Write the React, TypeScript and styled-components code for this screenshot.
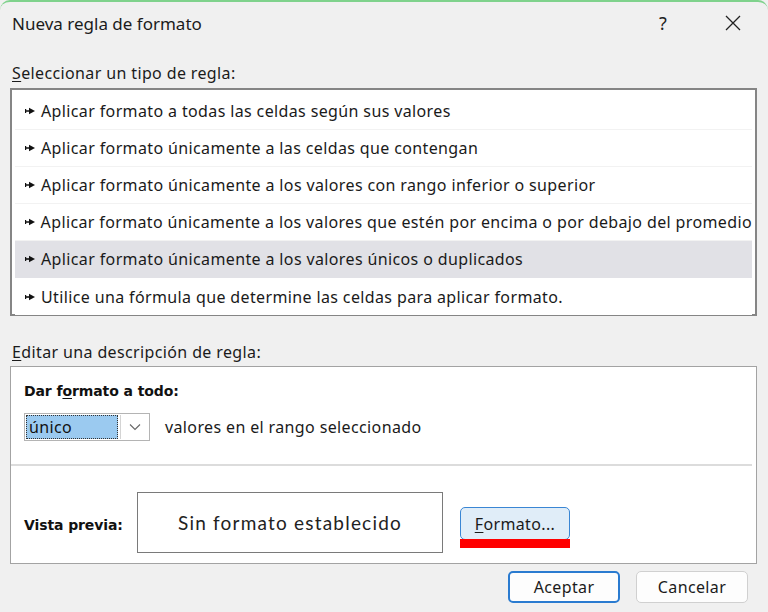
import React, { useState } from 'react'
import styled, { createGlobalStyle } from 'styled-components'

const GlobalStyle = createGlobalStyle`
    html, body {
        margin: 0;
        padding: 0;
        background: #f0f0f0;
    }
`

const rules = [
    'Aplicar formato a todas las celdas según sus valores',
    'Aplicar formato únicamente a las celdas que contengan',
    'Aplicar formato únicamente a los valores con rango inferior o superior',
    'Aplicar formato únicamente a los valores que estén por encima o por debajo del promedio',
    'Aplicar formato únicamente a los valores únicos o duplicados',
    'Utilice una fórmula que determine las celdas para aplicar formato.',
]

const Dialog = styled.div`
    width: 768px;
    height: 612px;
    box-sizing: border-box;
    background: #f0f0f0;
    border-top: 2px solid #7fd28c;
    border-radius: 10px 10px 0 0;
    font-family: 'Noto Sans', 'Open Sans', sans-serif;
    color: #1a1a1a;
    overflow: hidden;
    display: flex;
    flex-direction: column;
`

const TitleBar = styled.div`
    height: 42px;
    display: flex;
    align-items: center;
    padding: 0 0 0 12px;
`

const Title = styled.div`
    flex: 1;
    font-size: 17px;
    color: #1b1b1b;
`

const TitleButton = styled.div`
    width: 70px;
    height: 42px;
    display: flex;
    align-items: center;
    justify-content: center;
    font-size: 18px;
    color: #222;
`

const Body = styled.div`
    padding: 0 11px 0 10px;
    display: flex;
    flex-direction: column;
`

// text in the dialog is Segoe-like: slightly wider than Noto Sans
const uiText = `
    font-size: 16px;
    letter-spacing: 0.37px;
`

const SectionLabel = styled.div<{ $top: number }>`
    ${uiText}
    margin: ${(p) => p.$top}px 0 0 2px;
    height: 22px;
    line-height: 22px;
    color: #1b1b1b;
    u {
        text-decoration: underline;
        text-underline-offset: 2px;
    }
`

const ListBox = styled.div`
    margin-top: 4px;
    height: 228px;
    box-sizing: border-box;
    border: 2px solid #858585;
    background: #fff;
    padding: 3px 3px 0 3px;
`

const RuleRow = styled.div<{ $selected: boolean }>`
    ${uiText}
    height: 37px;
    box-sizing: border-box;
    display: flex;
    align-items: center;
    padding-left: 10px;
    white-space: nowrap;
    background: ${(p) => (p.$selected ? '#e1e1e6' : '#fff')};
    border-bottom: 1px solid ${(p) => (p.$selected ? '#e1e1e6' : '#f2f2f2')};
    &:last-child {
        border-bottom: none;
    }
`

const ArrowBox = styled.span`
    width: 16px;
    display: flex;
    align-items: center;
`

const DescBox = styled.div`
    margin-top: 3px;
    height: 198px;
    box-sizing: border-box;
    border: 1px solid #a3a3a3;
    background: #fff;
    display: flex;
    flex-direction: column;
`

const DescTop = styled.div`
    padding: 14px 13px 0 13px;
    height: 99px;
    box-sizing: border-box;
    border-bottom: 2px solid #dcdcdc;
    margin-right: 4px;
`

const BoldLabel = styled.div`
    font-family: 'DejaVu Sans', Verdana, sans-serif;
    font-weight: bold;
    font-size: 14px;
    line-height: 20px;
    letter-spacing: -0.1px;
    color: #111;
    u {
        text-decoration: underline;
        text-underline-offset: 2px;
    }
`

const SelectLine = styled.div`
    ${uiText}
    margin-top: 12px;
    display: flex;
    align-items: center;
    gap: 15px;
`

const Combo = styled.div`
    width: 126px;
    height: 28px;
    box-sizing: border-box;
    border: 1px solid #b4b4b4;
    display: flex;
    align-items: stretch;
    padding: 1px;
    background: #fff;
`

const ComboValue = styled.div`
    flex: 1;
    background: #9bcaf0;
    outline: 1px dotted #333;
    outline-offset: -1px;
    display: flex;
    align-items: center;
    padding-left: 3px;
    color: #111;
`

const ComboButton = styled.div`
    width: 27px;
    display: flex;
    align-items: center;
    justify-content: center;
    border-left: 1px solid #d4d4d4;
    margin-left: 2px;
`

const PreviewRow = styled.div`
    flex: 1;
    display: flex;
    align-items: flex-start;
    padding: 26px 13px 0 13px;
`

const PreviewLabel = styled(BoldLabel)`
    width: 113px;
    align-self: center;
    margin-top: -6px;
`

const PreviewBox = styled.div`
    width: 306px;
    height: 61px;
    box-sizing: border-box;
    border: 1px solid #7a7a7a;
    display: flex;
    align-items: center;
    justify-content: center;
    font-family: Lato, 'Open Sans', sans-serif;
    font-size: 19px;
    letter-spacing: 1.2px;
    color: #222;
`

const FormatWrap = styled.div`
    margin-left: 17px;
    margin-top: 15px;
    display: flex;
    flex-direction: column;
`

const FormatButton = styled.div`
    ${uiText}
    width: 110px;
    height: 33px;
    box-sizing: border-box;
    border: 1px solid #3a86d4;
    border-radius: 5px;
    background: #e0edf8;
    display: flex;
    align-items: center;
    justify-content: center;
    u {
        text-decoration: underline;
        text-underline-offset: 2px;
    }
`

const RedBar = styled.div`
    height: 9px;
    margin-top: -1px;
    background: #ff0000;
`

const Footer = styled.div`
    display: flex;
    justify-content: flex-end;
    gap: 16px;
    padding: 7px 20px 0 0;
`

const Button = styled.div<{ $primary?: boolean }>`
    ${uiText}
    width: 112px;
    height: 32px;
    box-sizing: border-box;
    border-radius: 5px;
    background: #fdfdfd;
    border: ${(p) => (p.$primary ? '2px solid #2a7bd0' : '1px solid #d0d0d0')};
    display: flex;
    align-items: center;
    justify-content: center;
    color: #1b1b1b;
`

const RuleArrow = () => (
    <svg width="11" height="8" viewBox="0 0 11 8">
        <path d="M0.6 2 V6" stroke="#111" strokeWidth="1.2" />
        <path d="M0.6 4 H5" stroke="#111" strokeWidth="1.6" />
        <path d="M4 0.8 L10 4 L4 7.2 Z" fill="#111" />
    </svg>
)

const Chevron = () => (
    <svg width="12" height="8" viewBox="0 0 12 8">
        <path d="M1 1.5 L6 6.5 L11 1.5" fill="none" stroke="#666" strokeWidth="1.1" />
    </svg>
)

const CloseIcon = () => (
    <svg width="16" height="16" viewBox="0 0 16 16">
        <path d="M1 1 L15 15 M15 1 L1 15" stroke="#222" strokeWidth="1.3" />
    </svg>
)

const App = () => {
    const [selected, setSelected] = useState(4)
    return <>
        <GlobalStyle />
        <Dialog>
            <TitleBar>
                <Title>Nueva regla de formato</Title>
                <TitleButton>?</TitleButton>
                <TitleButton><CloseIcon /></TitleButton>
            </TitleBar>
            <Body>
                <SectionLabel $top={18}><u>S</u>eleccionar un tipo de regla:</SectionLabel>
                <ListBox>
                    {rules.map((r, i) => (
                        <RuleRow key={i} $selected={i === selected} onClick={() => setSelected(i)}>
                            <ArrowBox><RuleArrow /></ArrowBox>{r}
                        </RuleRow>
                    ))}
                </ListBox>
                <SectionLabel $top={25}><u>E</u>ditar una descripción de regla:</SectionLabel>
                <DescBox>
                    <DescTop>
                        <BoldLabel>Dar f<u>o</u>rmato a todo:</BoldLabel>
                        <SelectLine>
                            <Combo>
                                <ComboValue>único</ComboValue>
                                <ComboButton><Chevron /></ComboButton>
                            </Combo>
                            valores en el rango seleccionado
                        </SelectLine>
                    </DescTop>
                    <PreviewRow>
                        <PreviewLabel>Vista previa:</PreviewLabel>
                        <PreviewBox>Sin formato establecido</PreviewBox>
                        <FormatWrap>
                            <FormatButton><u>F</u>ormato...</FormatButton>
                            <RedBar />
                        </FormatWrap>
                    </PreviewRow>
                </DescBox>
            </Body>
            <Footer>
                <Button $primary>Aceptar</Button>
                <Button>Cancelar</Button>
            </Footer>
        </Dialog>
    </>
}

export default App
